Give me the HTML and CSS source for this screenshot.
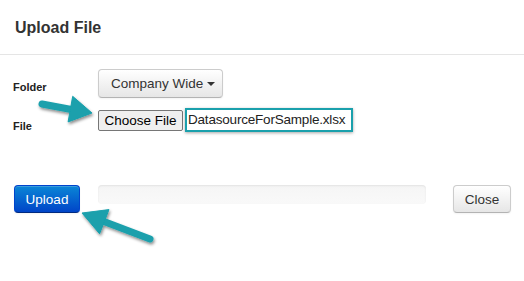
FILE: index.html
```html
<!DOCTYPE html>
<html>
<head>
<meta charset="utf-8">
<link rel="stylesheet" href="styles.css">
</head>
<body>
<div class="modal">
  <div class="modal-header"><h3 class="title">Upload File</h3></div>
  <div class="modal-body">
    <div class="row row-folder">
      <div class="label">Folder</div>
      <button class="btn btn-dropdown">Company Wide<span class="caret"></span></button>
    </div>
    <div class="row row-file">
      <div class="label">File</div>
      <div class="file-input">
        <button class="choose">Choose File</button>
        <span class="fname">DatasourceForSample.xlsx</span>
      </div>
    </div>
  </div>
  <div class="modal-footer">
    <button class="btn btn-primary">Upload</button>
    <div class="progress"></div>
    <button class="btn btn-close">Close</button>
  </div>
  <svg class="arrows" width="524" height="281" viewBox="0 0 524 281">
    <defs>
      <filter id="sh" x="-30%" y="-30%" width="160%" height="160%">
        <feDropShadow dx="1" dy="2" stdDeviation="1.5" flood-color="#000" flood-opacity="0.45"/>
      </filter>
    </defs>
    <g fill="#1aa0ac" stroke="#1aa0ac" filter="url(#sh)">
      <line x1="42" y1="104" x2="74" y2="110" stroke-width="7" stroke-linecap="round"/>
      <polygon points="92,113 72.7,96.3 68.1,121.9" stroke-width="1" stroke-linejoin="round"/>
      <line x1="150" y1="239" x2="100" y2="220" stroke-width="7" stroke-linecap="round"/>
      <polygon points="82,213 109,209.6 99.6,233.8" stroke-width="1" stroke-linejoin="round"/>
    </g>
  </svg>
</div>
</body>
</html>
```
FILE: styles.css
```css
* { box-sizing: border-box; }
html, body { margin: 0; padding: 0; background: #fff; }
body { width: 524px; height: 281px; overflow: hidden; font-family: "Liberation Sans", Arial, sans-serif; color: #333; }
.modal { position: relative; width: 524px; height: 281px; background: #fff; }
.modal-header { height: 55px; border-bottom: 1px solid #e5e5e5; padding: 0 15px; display: flex; align-items: center; }
.title { margin: 0; font-size: 16px; font-weight: bold; color: #333; line-height: 20px; padding-top: 2px; }
.modal-body { padding: 14px 0 0 13px; }
.row { display: flex; align-items: flex-start; }
.label { width: 85px; font-size: 11px; font-weight: bold; color: #222; line-height: 13px; }
.row-folder .label { padding-top: 12px; }
.row-file { margin-top: 10px; }
.row-file .label { padding-top: 12px; }
.btn { font-family: "Liberation Sans", Arial, sans-serif; font-size: 13.5px; color: #333; white-space: nowrap; border: 1px solid #ccc; border-bottom-color: #b3b3b3; border-radius: 4px; background: linear-gradient(#ffffff, #e6e6e6); box-shadow: inset 0 1px 0 rgba(255,255,255,.2), 0 1px 2px rgba(0,0,0,.05); padding: 0; margin: 0; display: flex; align-items: center; justify-content: center; }
.btn-dropdown { width: 125px; height: 29px; padding: 0 0 0 12px; justify-content: flex-start; }
.caret { display: inline-block; width: 0; height: 0; margin-left: 4px; border-top: 4px solid #333; border-left: 4px solid transparent; border-right: 4px solid transparent; margin-top: 1px; }
.file-input { display: flex; align-items: center; height: 24px; }
.choose { font-family: "Liberation Sans", Arial, sans-serif; font-size: 13.5px; color: #000; white-space: nowrap; height: 21px; width: 85px; margin: 0; padding: 0; border: 1px solid #767676; border-radius: 2px; background: #efefef; }
.fname { margin-left: 2px; height: 24px; width: 168px; border: 2px solid #1aa0ac; box-shadow: 0 1px 3px rgba(0,0,0,.35); font-size: 13.5px; color: #222; line-height: 20px; padding-left: 1px; white-space: nowrap; letter-spacing: -0.2px; }
.modal-footer { display: flex; align-items: flex-start; padding: 0 13px 0 14px; margin-top: 52px; }
.btn-primary { width: 66px; height: 28px; color: #fff; border: 1px solid #0044cc; border-bottom-color: #002a80; background: linear-gradient(#0a86d6, #0045c8); }
.progress { width: 328px; height: 19px; margin-left: 18px; border-radius: 4px; background: linear-gradient(#f5f5f5, #f9f9f9); box-shadow: inset 0 1px 2px rgba(0,0,0,.08); }
.btn-close { width: 58px; height: 28px; margin-left: auto; }
.arrows { position: absolute; left: 0; top: 0; pointer-events: none; }
```
